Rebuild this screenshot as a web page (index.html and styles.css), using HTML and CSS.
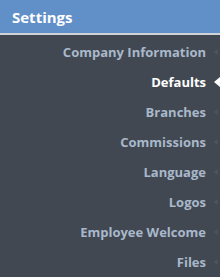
FILE: index.html
```html
<!DOCTYPE html>
<html lang="en">
<head>
    <meta charset="UTF-8">
    <meta name="viewport" content="width=device-width, initial-scale=1.0">
    <title>Settings</title>
    <link rel="stylesheet" href="styles.css">
</head>
<body>
<div class="settings-menu">
    <header>
        <h1>Settings</h1>
    </header>
    <ul class="menu-list">
        <li><a href="#">Company Information</a></li>
        <li class="active"><a href="#">Defaults</a></li>
        <li><a href="#">Branches</a></li>
        <li><a href="#">Commissions</a></li>
        <li><a href="#">Language</a></li>
        <li><a href="#">Logos</a></li>
        <li><a href="#">Employee Welcome</a></li>
        <li><a href="#">Files</a></li>
    </ul>
</div>
</body>
</html>
```

FILE: styles.css
```css
/* Global Styles */
body {
    font-family: 'Open Sans', 'Liberation Sans', sans-serif;
    background-color: #414852;
    margin: 0;
    padding: 0;
}

.settings-menu {
    width: 220px;
    min-height: 277px;
    background-color: #414852;
}

header {
    background-color: #6190c8;
    height: 33px;
    border-bottom: 2px solid #cfd3d7;
    display: flex;
    align-items: center;
    padding: 0 12px;
}

header h1 {
    margin: 0;
    font-size: 15px;
    font-weight: 700;
    color: white;
}

.menu-list {
    list-style: none;
    margin: 0;
    padding: 2px 0 0;
}

.menu-list li {
    height: 30px;
    display: flex;
    align-items: center;
    justify-content: flex-end;
    padding-right: 14px;
    position: relative;
}

.menu-list a {
    color: #a9b8ca;
    font-size: 13px;
    font-weight: 700;
    text-decoration: none;
}

/* small arrow on the right */
.menu-list li::after {
    content: "";
    position: absolute;
    right: 2px;
    top: 50%;
    margin-top: -3px;
    border-style: solid;
    border-width: 3px 5px 3px 0;
    border-color: transparent #4d535b transparent transparent;
}

.menu-list li.active a {
    color: white;
}

.menu-list li.active::after {
    right: 0;
    margin-top: -5px;
    border-width: 5px 6px 5px 0;
    border-color: transparent white transparent transparent;
}
```
